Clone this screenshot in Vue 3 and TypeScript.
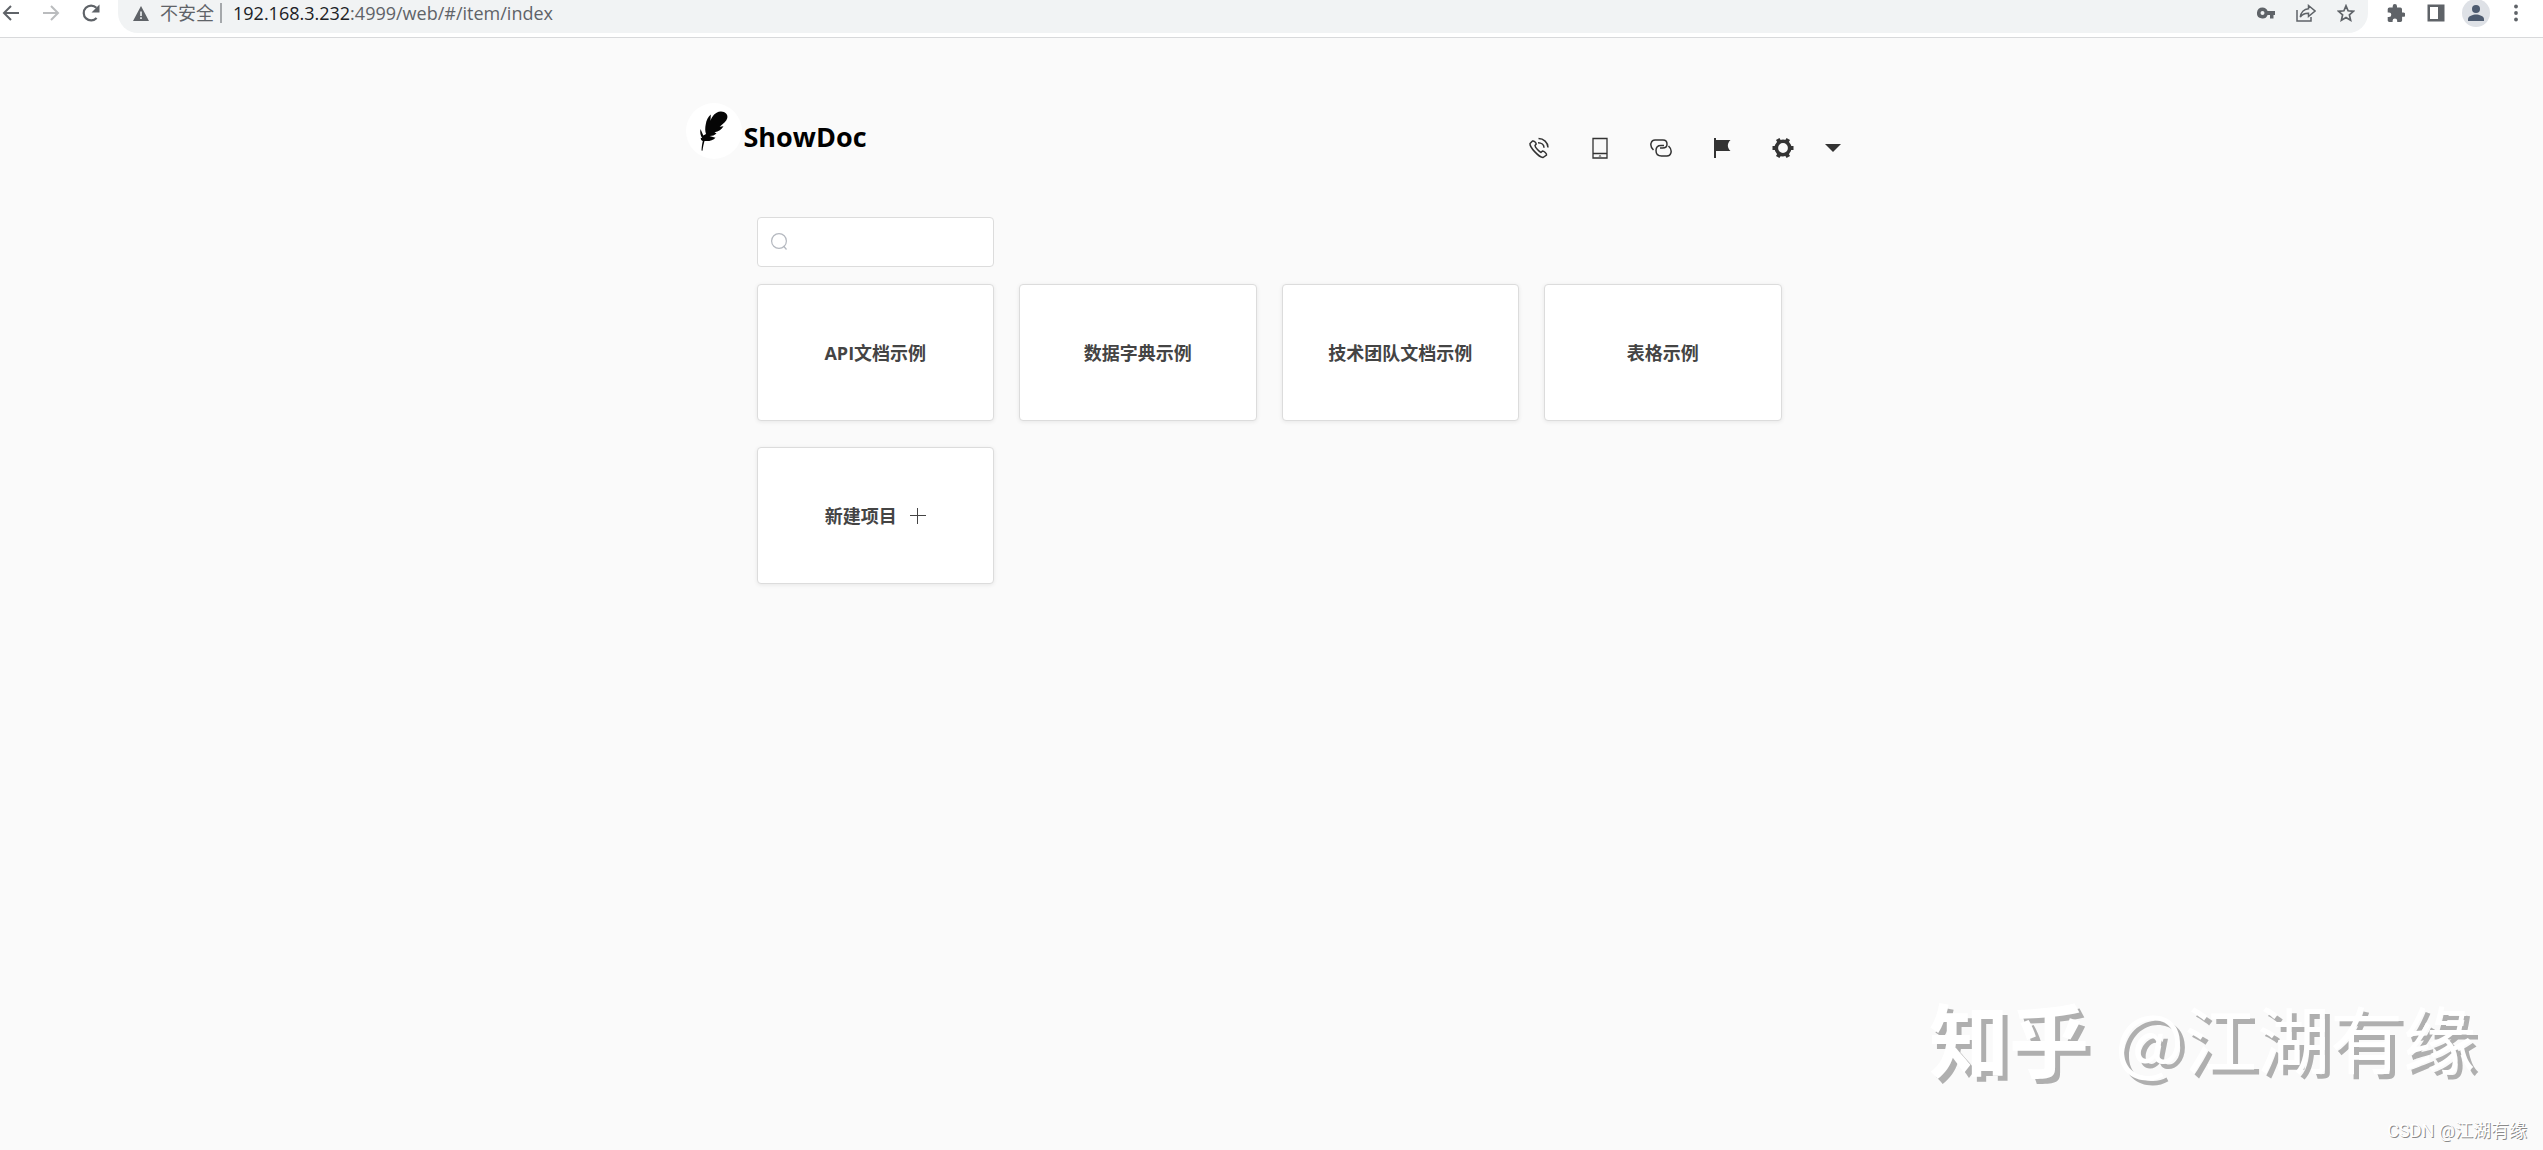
<script setup lang="ts">
import { ref } from 'vue'

interface Project {
  id: number
  name: string
}

const keyword = ref('')
const address = ref({ host: '192.168.3.232', rest: ':4999/web/#/item/index' })
const projects: Project[] = [
  { id: 1, name: 'API文档示例' },
  { id: 2, name: '数据字典示例' },
  { id: 3, name: '技术团队文档示例' },
  { id: 4, name: '表格示例' },
]
</script>

<template>
  <div class="window">
    <header class="toolbar">
      <nav class="history">
        <button type="button" aria-label="后退">
          <svg width="18" height="18" viewBox="0 0 18 18" fill="none" stroke="#5f6368" stroke-width="2"><path d="M17 9H2M9 2L2 9l7 7" /></svg>
        </button>
        <button type="button" aria-label="前进">
          <svg width="18" height="18" viewBox="0 0 18 18" fill="none" stroke="#babcbe" stroke-width="2"><path d="M1 9h15M9 2l7 7-7 7" /></svg>
        </button>
        <button type="button" aria-label="刷新">
          <svg width="18" height="18" viewBox="0 0 18 18"><path d="M14.6 14A7.4 7.4 0 1 1 14.4 3.8" fill="none" stroke="#5f6368" stroke-width="2.2" /><path d="M17.5 0.5v8h-8z" fill="#5f6368" /></svg>
        </button>
      </nav>
      <div class="omnibox">
        <svg class="warning" width="16" height="15" viewBox="0 0 16 15"><path d="M8 0l8 15H0z" fill="#5f6368" /><path d="M8 5.5v4.5M8 11.300v1.700" stroke="#f1f3f4" stroke-width="1.6" /></svg>
        <span class="insecure">不安全</span>
        <span class="divider"></span>
        <span class="url"><b>{{ address.host }}</b>{{ address.rest }}</span>
        <div class="actions">
          <button type="button" aria-label="密码">
            <svg width="18" height="12" viewBox="0 0 18 12"><path fill="#5f6368" fill-rule="evenodd" d="M5.500 0.500a5.500 5.500 0 1 0 5.100 7.500H13v3.500h3.500V8H18V4h-7.400A5.500 5.500 0 0 0 5.500 0.500zM5.500 4a2 2 0 1 1 0 4 2 2 0 0 1 0-4z" /></svg>
          </button>
          <button type="button" aria-label="分享">
            <svg width="20" height="18" viewBox="0 0 20 18" fill="none" stroke="#5f6368" stroke-width="1.500"><path d="M1 6v11h14v-4" /><path d="M12.500 1.500L19 7l-6.500 5.500V9.300C8.500 9.200 6 10.500 4.300 13.200 4.800 8.500 8 5 12.500 4.700z" /></svg>
          </button>
          <button type="button" aria-label="收藏">
            <svg width="18" height="18" viewBox="0 0 18 18" fill="none" stroke="#5f6368" stroke-width="1.700"><path d="M9 1.800l2.100 5 5.400.5-4.100 3.600 1.200 5.300L9 13.400l-4.600 2.800 1.200-5.300L1.500 7.300l5.400-.5z" /></svg>
          </button>
        </div>
      </div>
      <div class="extras">
        <button type="button" aria-label="扩展程序">
          <svg width="18" height="18" viewBox="0 0 18 18"><path fill="#5f6368" d="M16.200 8.600h-1.200V5.200a1.700 1.700 0 0 0-1.700-1.700H10V2.200a2.100 2.100 0 0 0-4.300 0v1.300H2.400A1.700 1.700 0 0 0 .7 5.200v3.200H2a2.300 2.300 0 0 1 0 4.600H.7v3.200c0 1 .8 1.700 1.700 1.700h3.200v-1.200a2.300 2.300 0 0 1 4.600 0v1.200h3.200c1 0 1.700-.8 1.700-1.700v-3.400h1.200a2.100 2.100 0 0 0 0-4.200z" /></svg>
        </button>
        <button type="button" aria-label="侧边栏">
          <svg width="18" height="18" viewBox="0 0 18 18"><path fill="#5f6368" fill-rule="evenodd" d="M0.500 0.500h17v17h-17zM3 3v12h8V3z" /></svg>
        </button>
        <button type="button" class="avatar" aria-label="用户">
          <svg width="28" height="28" viewBox="0 0 28 28"><circle cx="14" cy="14" r="14" fill="#dee1e6" /><circle cx="14" cy="10" r="4" fill="#4d5b70" /><path d="M6 22v-2c0-3 5-4.500 8-4.500s8 1.500 8 4.500v2z" fill="#4d5b70" /></svg>
        </button>
        <button type="button" aria-label="更多">
          <svg width="18" height="18" viewBox="0 0 18 18" fill="#5f6368"><circle cx="9" cy="2.500" r="1.900" /><circle cx="9" cy="9" r="1.900" /><circle cx="9" cy="15.500" r="1.900" /></svg>
        </button>
      </div>
    </header>

    <div class="page">
      <header class="site-header">
        <a class="brand" href="#/">
          <svg width="56" height="56" viewBox="0 0 56 56">
            <circle cx="28" cy="28" r="28" fill="#fff" />
            <path fill="#050505" d="M15.500 47.500c.2-4 .7-7 1.300-9.500-1.600-.8-2.200-1.800-2-3.300l1.500.6C14.500 32.500 13.800 29.500 14.500 26l2.800 6.500 2.700-1.500c-1-3-1-6-.2-10 .6-4 2.200-7 5-9.500l-.3 6.300C26 13 29.500 9 34.500 8.500c4.500-.3 7.700 2.800 6.800 6.500-.8 3.200-3.500 5-7.600 8.700l3.800-.4c-2 3.200-4.800 5.200-9 5.900l2 1.300c-2 1.800-4.200 2.600-7 2.500l6 1.700c-2.300 2.600-6 3.700-11 3.300-.8 3-1.500 6-2 9.700z" />
          </svg>
          <h1>ShowDoc</h1>
        </a>
        <nav class="tools">
          <a href="#/contact" aria-label="联系我们">
            <svg width="22" height="22" viewBox="0 0 22 22" fill="none" stroke="#333" stroke-width="1.500"><path d="M4.500 4L2 6.500C1.500 10 10.500 20 15 20.500l3.500-2.500c.5-1.500-2.500-4-4-4l-1.500 1.500C11.500 15 7 10.500 7 8.500L8.200 7C8 5.500 6 3.500 4.500 4zM10.500 1.500c5 0 9.500 4 9.500 9M10 5.800c3.500 0 6 2 6 5" /></svg>
          </a>
          <a href="#/mobile" aria-label="手机版">
            <svg width="22" height="22" viewBox="0 0 22 22" fill="none" stroke="#333" stroke-width="1.300"><path d="M4 1.500h14v19.500H4zM4 16.500h14" /><path d="M9.500 19.500L11 18l1.500 1.500z" fill="#333" stroke="none" /></svg>
          </a>
          <a href="#/integration" aria-label="接口">
            <svg width="22" height="22" viewBox="0 0 22 22" fill="none" stroke="#333" stroke-width="1.500"><path d="M3.500 13C.8 10.500.5 7.500 1.300 5.500 2 3.500 3 3 5 3h8c2.500 0 4 1.800 4 4.200 0 2.300-2 3.800-4.500 3.800H10" /><path d="M18.500 9c2.700 2.500 3 5.500 2.200 7.500-.7 2-1.700 2.500-3.700 2.500h-5.500C8 19 6 17 6 13.500 6 10.300 8 8.500 11 8.500h3" /></svg>
          </a>
          <a href="#/feedback" aria-label="反馈">
            <svg width="22" height="22" viewBox="0 0 22 22" fill="#333"><path d="M3 1h2v20H3zM5 3h14.500c-3.500 3.500-3.500 7.500 0 11H5z" /></svg>
          </a>
          <a href="#/setting" aria-label="设置">
            <svg width="22" height="22" viewBox="0 0 22 22" fill="none" stroke="#333"><circle cx="11" cy="11" r="6.700" stroke-width="3.600" /><path d="M0.500 11h3M18.500 11h3M5.700 1.900l1.500 2.600M14.800 17.500l1.500 2.600M16.300 1.900l-1.500 2.600M7.200 17.500l-1.500 2.600" stroke-width="4" /></svg>
          </a>
          <button type="button" class="caret" aria-label="更多">
            <svg width="16" height="8" viewBox="0 0 16 8"><path d="M0 0h16L8 8z" fill="#333" /></svg>
          </button>
        </nav>
      </header>

      <main class="content">
        <label class="search">
          <svg width="18" height="18" viewBox="0 0 18 18" fill="none" stroke="#b4b8bf" stroke-width="1.200"><circle cx="9" cy="8" r="7.400" /><path d="M13.500 13l3 3.500" /></svg>
          <input v-model="keyword" type="text" aria-label="搜索项目" />
        </label>
        <div class="grid">
          <a v-for="project in projects" :key="project.id" class="card" :href="'#/' + project.id">{{ project.name }}</a>
          <a class="card" href="#/item/add">
            新建项目
            <svg width="16" height="16" viewBox="0 0 16 16" stroke="#444" stroke-width="1"><path d="M0 7.500h16M7.500 0v16" /></svg>
          </a>
        </div>
      </main>
    </div>

    <div class="watermark"><b>知乎</b><span>@江湖有缘</span></div>
    <div class="credit">CSDN @江湖有缘</div>
  </div>
</template>

<style>
body {
  background: #fafafa;
}
</style>

<style scoped>
.window {
  position: relative;
  min-height: 100vh;
  overflow: hidden;
  background: #fafafa;
  font-family: 'Open Sans', 'Noto Sans CJK SC', sans-serif;
  color: #444;
}
button {
  display: flex;
  align-items: center;
  justify-content: center;
  padding: 0;
  border: 0;
  background: none;
}
a {
  color: inherit;
  text-decoration: none;
}
svg {
  display: block;
  flex: none;
}
.toolbar {
  display: flex;
  box-sizing: border-box;
  height: 38px;
  border-bottom: 1px solid #d8d9db;
  background: #fff;
}
.history {
  display: flex;
  gap: 22px;
  height: 26px;
  padding: 0 18px 0 2px;
}
.omnibox {
  display: flex;
  flex: 1;
  align-items: center;
  box-sizing: border-box;
  height: 33px;
  padding: 0 13px 7px 15px;
  border-radius: 0 0 20px 20px;
  background: #f1f3f4;
  font-size: 18px;
  line-height: 26px;
  color: #5f6368;
  white-space: nowrap;
}
.insecure {
  margin-left: 11px;
}
.divider {
  width: 2px;
  height: 20px;
  margin: 0 11px 0 6px;
  background: #a5a8ab;
}
.url b {
  font-weight: 400;
  color: #202124;
}
.actions {
  display: flex;
  gap: 21px;
  margin-left: auto;
}
.extras {
  display: flex;
  align-items: center;
  gap: 22px;
  height: 26px;
  padding: 0 18px 0 19px;
}
.avatar {
  margin: 0 -5px;
}
.page {
  max-width: 1172px;
  margin: 0 auto;
}
.site-header {
  display: flex;
  align-items: center;
  justify-content: space-between;
  padding: 65px 17px 0 0;
}
.brand {
  display: flex;
  align-items: center;
  gap: 2px;
}
h1 {
  margin: 12px 0 0;
  font-size: 27px;
  line-height: 36px;
  color: #000;
}
.tools {
  display: flex;
  align-items: center;
  gap: 39px;
  padding-top: 34px;
}
.caret {
  margin-left: -8px;
}
.content {
  padding: 58px 76px 0 71px;
}
.search {
  display: flex;
  align-items: center;
  gap: 8px;
  box-sizing: border-box;
  width: 237px;
  height: 50px;
  padding: 0 12px;
  border: 1px solid #dcdcdc;
  border-radius: 4px;
  background: #fff;
}
.search input {
  flex: 1;
  min-width: 0;
  height: 40px;
  padding: 0;
  border: 0;
  outline: 0;
  background: none;
  font: inherit;
}
.grid {
  display: grid;
  grid-template-columns: repeat(4, 1fr);
  gap: 26px 25px;
  margin-top: 17px;
}
.card {
  display: flex;
  align-items: center;
  justify-content: center;
  gap: 13px;
  box-sizing: border-box;
  height: 137px;
  border: 1px solid #dcdcdc;
  border-radius: 4px;
  background: #fff;
  box-shadow: 0 1px 4px rgba(0, 0, 0, 0.08);
  font-size: 18px;
  font-weight: 700;
  line-height: 26px;
}
.watermark {
  display: flex;
  align-items: center;
  gap: 26px;
  position: absolute;
  right: 67px;
  bottom: 70px;
  font-family: 'Noto Sans CJK SC', sans-serif;
  font-size: 73px;
  line-height: 88px;
  color: #fff;
  text-shadow: 5px 5px 0 #afafaf;
  white-space: nowrap;
}
.watermark b {
  font-size: 80px;
}
.credit {
  position: absolute;
  right: 16px;
  bottom: 6px;
  font-family: Roboto, 'Noto Sans CJK SC', sans-serif;
  font-size: 18px;
  line-height: 26px;
  color: #fff;
  text-shadow: 1px 1px 0 #8a8a8a;
  white-space: nowrap;
}
</style>
